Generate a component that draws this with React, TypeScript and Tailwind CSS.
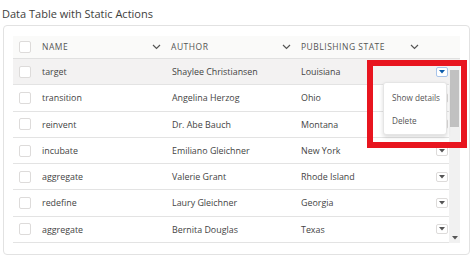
import React from 'react';

type Row = { name: string; author: string; state: string };

const rows: Row[] = [
  { name: 'target', author: 'Shaylee Christiansen', state: 'Louisiana' },
  { name: 'transition', author: 'Angelina Herzog', state: 'Ohio' },
  { name: 'reinvent', author: 'Dr. Abe Bauch', state: 'Montana' },
  { name: 'incubate', author: 'Emiliano Gleichner', state: 'New York' },
  { name: 'aggregate', author: 'Valerie Grant', state: 'Rhode Island' },
  { name: 'redefine', author: 'Laury Gleichner', state: 'Georgia' },
  { name: 'aggregate', author: 'Bernita Douglas', state: 'Texas' },
];

function Checkbox() {
  return <div className="w-[12px] h-[12px] border border-[#dddbda] rounded-[2px] bg-white" />;
}

function Chevron() {
  return (
    <svg width="9" height="6" viewBox="0 0 9 6" fill="none">
      <polyline points="1,1 4.5,4.5 8,1" stroke="#555" strokeWidth="1.2" />
    </svg>
  );
}

function Caret({ color }: { color: string }) {
  return (
    <svg width="6" height="4" viewBox="0 0 6 4">
      <polygon points="0,0 6,0 3,3.5" fill={color} />
    </svg>
  );
}

function ActionButton({ active }: { active?: boolean }) {
  return (
    <div
      className={
        active
          ? 'w-[12px] h-[10px] border border-[#a8c4ea] rounded-[2px] bg-white flex items-center justify-center'
          : 'w-[12px] h-[10px] border border-[#dddbda] rounded-[2px] bg-white flex items-center justify-center'
      }
    >
      <Caret color={active ? '#0b5cab' : '#555'} />
    </div>
  );
}

function HeaderCell({ label, width }: { label: string; width: string }) {
  return (
    <div className={`${width} flex items-center justify-between pl-[4px] pr-[6px]`}>
      <span className="tracking-[0.06em]">{label}</span>
      <Chevron />
    </div>
  );
}

export default function App() {
  return (
    <div
      className="relative w-[474px] h-[257px] bg-white overflow-hidden text-[#444]"
      style={{ fontFamily: '"Open Sans", "Noto Sans", sans-serif' }}
    >
      <div className="h-[25px] pt-[7px] px-[2px] text-[11px] leading-[14px] text-[#3e3e3c]">
        Data Table with Static Actions
      </div>

      <div className="ml-[3px] w-[467px] h-[230px] border border-[#e2e2e2] rounded-[4px] pt-[10px] px-[9px]">
        <div className="h-[23px] bg-[#fafaf9] border-b border-[#e0e0e0] flex text-[8.5px] text-[#555]">
          <div className="w-[25px] flex items-center pl-[6px]">
            <Checkbox />
          </div>
          <HeaderCell label="NAME" width="w-[129px]" />
          <HeaderCell label="AUTHOR" width="w-[130px]" />
          <HeaderCell label="PUBLISHING STATE" width="w-[128px]" />
        </div>

        <div className="flex">
          <div className="w-[436px] text-[8.9px]">
            {rows.map((r, i) => (
              <div
                key={i}
                className={
                  i === 0
                    ? 'h-[26.3px] flex items-center border-b border-[#e3e3e3] bg-[#f3f2f2]'
                    : 'h-[26.3px] flex items-center border-b border-[#e3e3e3]'
                }
              >
                <div className="w-[25px] pl-[6px]">
                  <Checkbox />
                </div>
                <div className="w-[129px] pl-[4px]">{r.name}</div>
                <div className="w-[130px] pl-[5px]">{r.author}</div>
                <div className="w-[128px] pl-[4px]">{r.state}</div>
                <div className="w-[24px] flex justify-end pr-[1px]">
                  <ActionButton active={i === 0} />
                </div>
              </div>
            ))}
          </div>

          <div className="w-[11px] bg-[#f1f1f1] flex flex-col">
            <div className="h-[11px]" />
            <div className="h-[57px] mx-[1px] bg-[#c1c1c1]" />
            <div className="flex-1" />
            <div className="h-[10px] flex items-center justify-center">
              <Caret color="#555" />
            </div>
          </div>
        </div>
      </div>

      <div className="absolute left-[383px] top-[82px] w-[64px] h-[53px] bg-white border border-[#e5e5e5] rounded-[3px] shadow-[0_2px_4px_rgba(0,0,0,0.15)] pt-[4px] text-[8.2px] text-[#555]">
        <div className="h-[23px] flex items-center pl-[8px]">Show details</div>
        <div className="h-[23px] flex items-center pl-[8px]">Delete</div>
      </div>

      <div className="absolute left-[367px] top-[60px] w-[100px] h-[88px] border-[6px] border-[#e8151f]" />
    </div>
  );
}
